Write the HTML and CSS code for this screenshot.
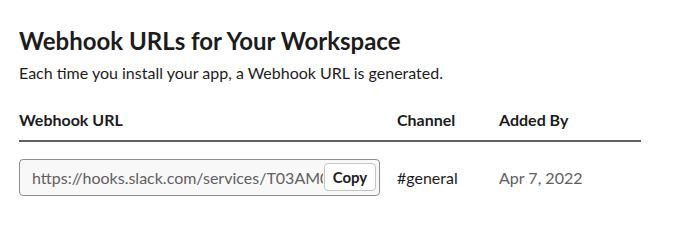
FILE: index.html
```html
<!DOCTYPE html>
<html>
<head>
<meta charset="utf-8">
<link rel="stylesheet" href="styles.css">
</head>
<body>
<div class="page">
  <h1 class="title">Webhook URLs for Your Workspace</h1>
  <p class="desc">Each time you install your app, a Webhook URL is generated.</p>
  <div class="table">
    <div class="head">
      <div class="th">Webhook URL</div>
      <div class="th">Channel</div>
      <div class="th">Added By</div>
    </div>
    <div class="row">
      <div class="url-field">
        <span class="url-text">https://hooks.slack.com/services/T03AM0</span>
        <button class="copy">Copy</button>
      </div>
      <div class="channel">#general</div>
      <div class="date">Apr 7, 2022</div>
    </div>
  </div>
</div>
</body>
</html>
```
FILE: styles.css
```css
html, body {
  margin: 0;
  padding: 0;
  background: #ffffff;
}
.page {
  font-family: Lato, "Liberation Sans", sans-serif;
  color: #1d1c1d;
  padding: 26px 0 0 19px;
  width: 622px;
}
.title {
  margin: 0;
  font-size: 24px;
  font-weight: 700;
  line-height: 30px;
}
.desc {
  margin: 6px 0 0;
  font-size: 16px;
  line-height: 22px;
}
.table {
  margin-top: 25px;
}
.head, .row {
  display: grid;
  grid-template-columns: 378px 102px 1fr;
  align-items: center;
}
.head {
  border-bottom: 2px solid #616061;
  padding-bottom: 9px;
}
.th {
  font-size: 16px;
  font-weight: 700;
  line-height: 22px;
}
.row {
  padding-top: 17px;
}
.url-field {
  position: relative;
  width: 361px;
  height: 37px;
  box-sizing: border-box;
  border: 1px solid #8d8d8d;
  border-radius: 4px;
  background: #f8f8f8;
  display: flex;
  align-items: center;
  padding: 0 56px 0 12px;
}
.url-text {
  white-space: nowrap;
  overflow: hidden;
  flex: 1;
  min-width: 0;
  font-size: 16px;
  color: #616061;
}
.copy {
  position: absolute;
  right: 3px;
  top: 3px;
  width: 52px;
  height: 28px;
  box-sizing: border-box;
  border: 1px solid #c4c4c4;
  border-radius: 4px;
  background: #ffffff;
  font-family: Lato, "Liberation Sans", sans-serif;
  font-size: 15px;
  font-weight: 700;
  color: #1d1c1d;
  padding: 0;
}
.channel {
  font-size: 16px;
  color: #1d1c1d;
}
.date {
  font-size: 16px;
  color: #616061;
}
```
